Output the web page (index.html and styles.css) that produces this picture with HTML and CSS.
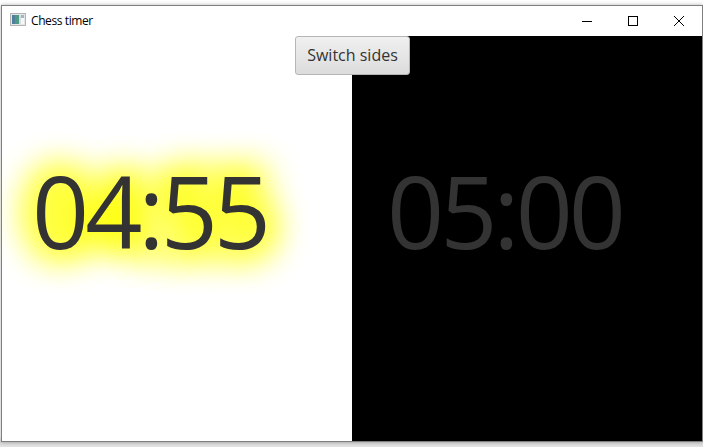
FILE: index.html
```html
<!DOCTYPE html>
<html lang="en">
<head>
    <meta charset="UTF-8">
    <title>Chess timer</title>
    <link rel="stylesheet" href="styles.css">
</head>
<body>
    <div class="window">
        <div class="titlebar">
            <svg class="app-icon" width="16" height="16" viewBox="0 0 16 16">
                <rect x="0.5" y="1.5" width="15" height="12" fill="#e6e6e6" stroke="#b4b4b4"/>
                <rect x="2" y="3" width="3" height="9" fill="#4f7f9a"/>
                <rect x="5" y="3" width="4" height="9" fill="#4f9a86"/>
                <rect x="9" y="3" width="2" height="9" fill="#d5dde0"/>
                <rect x="11" y="3" width="3" height="3" fill="#9fb6c2"/>
                <rect x="11" y="6" width="3" height="6" fill="#f7f7f7"/>
            </svg>
            <span class="title">Chess timer</span>
            <div class="controls">
                <div class="control">
                    <svg width="12" height="12" viewBox="0 0 12 12"><path d="M1 6.5H11" stroke="#000" fill="none"/></svg>
                </div>
                <div class="control">
                    <svg width="12" height="12" viewBox="0 0 12 12"><rect x="1.5" y="1.5" width="9" height="9" stroke="#000" fill="none"/></svg>
                </div>
                <div class="control">
                    <svg width="12" height="12" viewBox="0 0 12 12"><path d="M1 1L11 11M11 1L1 11" stroke="#000" fill="none"/></svg>
                </div>
            </div>
        </div>
        <div class="board">
            <div class="side side-active">
                <div class="time time-active">04:55</div>
            </div>
            <div class="side side-idle">
                <div class="time">05:00</div>
            </div>
            <button class="switch">Switch sides</button>
        </div>
    </div>
</body>
</html>
```

FILE: styles.css
```css
* {
    margin: 0;
    padding: 0;
    box-sizing: border-box;
}
html, body {
    height: 100%;
}
body {
    background: linear-gradient(#fff 0, #fff 436px, #d8d8d8 442px, #e4e4e4 447px);
    padding: 5px 0 5px 1px;
    overflow: hidden;
    font-family: "Open Sans", sans-serif;
}
.window {
    height: 437px;
    display: flex;
    flex-direction: column;
    border: 1px solid #7f7f7f;
    box-shadow: 0 0 4px rgba(0, 0, 0, 0.3);
    background: white;
}
.titlebar {
    height: 30px;
    display: flex;
    align-items: center;
    padding-left: 8px;
    background: white;
    flex-shrink: 0;
}
.app-icon {
    margin-right: 5px;
    margin-top: -2px;
}
.title {
    font-size: 12px;
    letter-spacing: -0.4px;
    color: black;
    margin-top: -2px;
}
.controls {
    margin-left: auto;
    display: flex;
}
.control {
    width: 46px;
    height: 30px;
    display: flex;
    align-items: center;
    justify-content: center;
}
.board {
    position: relative;
    flex: 1;
    display: grid;
    grid-template-columns: 350px 1fr;
}
.side {
    display: flex;
    align-items: center;
    padding-bottom: 57px;
}
.side-active {
    background: white;
    padding-left: 30px;
}
.side-idle {
    background: black;
    padding-left: 35px;
}
.time {
    font-size: 100px;
    letter-spacing: -4px;
    color: #333333;
    white-space: nowrap;
}
.time-active {
    text-shadow: 0 0 38px #ffff00, 0 0 38px #ffff00, 0 0 38px #ffff00, 0 0 38px #ffff00, 0 0 30px #ffff00;
}
.switch {
    position: absolute;
    top: 0;
    left: 293px;
    width: 115px;
    height: 39px;
    border: 1px solid #b5b5b5;
    border-radius: 3px;
    background: linear-gradient(#f0f0f0, #dcdcdc);
    color: #333333;
    font-family: "Open Sans", sans-serif;
    font-size: 16px;
    padding-bottom: 2px;
}
```
